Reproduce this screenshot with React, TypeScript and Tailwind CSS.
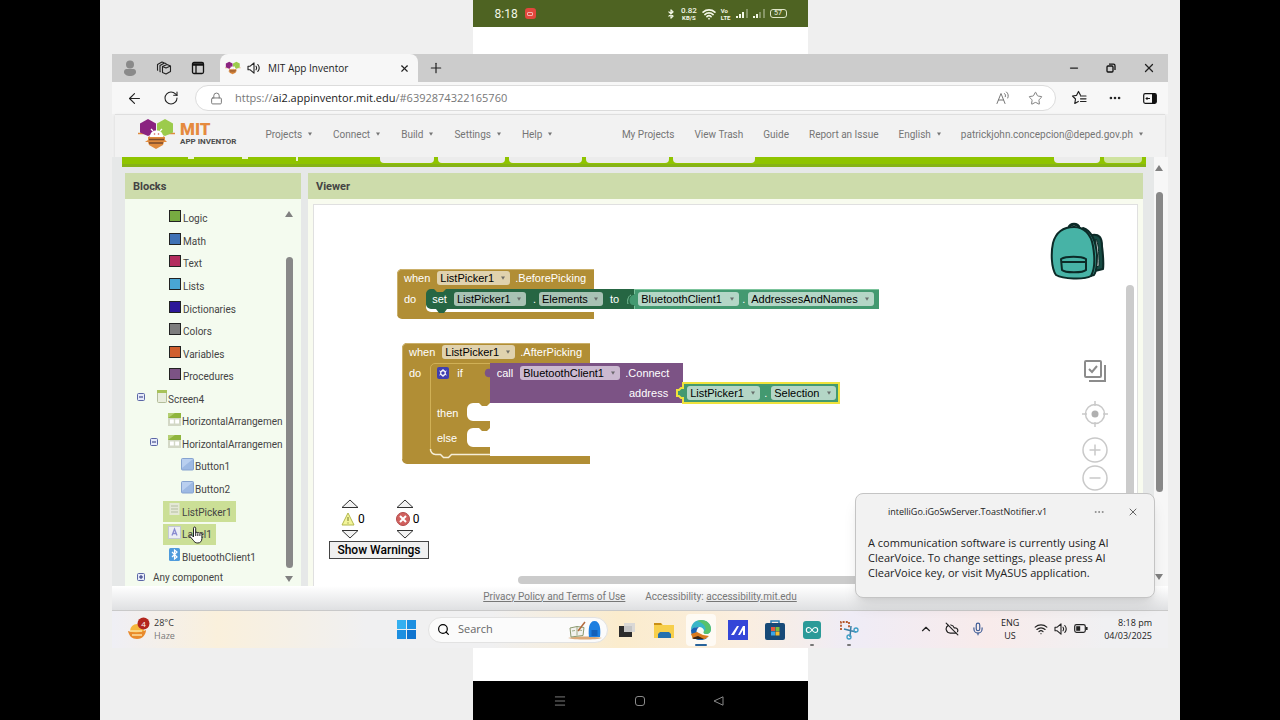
import { ReactNode } from "react"
import clsx from "clsx"
import {
  ArrowLeft,
  Bluetooth,
  ChevronUp,
  CloudOff,
  Ellipsis,
  Lock,
  Menu,
  Mic,
  Minus,
  Plus,
  RotateCw,
  Search,
  Star,
  Wifi,
  X,
} from "lucide-react"

const UI_FONT = "font-['Open_Sans',sans-serif]"
const WEB_FONT = "font-['Roboto',sans-serif]"

/* ---------- logos and icons ---------- */

function BeeLogo({ className }: { className?: string }) {
  return (
    <svg viewBox="0 0 38 30" className={className}>
      <path d="M0 14.500h37" stroke="#e08a3c" strokeWidth="1.400" />
      <path d="M10 0l8 4.500v9L10 17l-8-3.500v-9z" fill="#8a2380" />
      <path d="M27 0l8 4.500v9L27 17l-8-3.500v-9z" fill="#9ccb4c" />
      <path d="M10 18l8-3 9 3v3l2 2h-3l-1 3-7 4-7-4-1-3H7l3-2z" fill="#e08a3c" />
      <path d="M11 20.500h15M11 24h14" stroke="#7a4a2a" strokeWidth="1.500" />
      <path d="M12 18c0-4 2-6.500 6.500-6.500S25 14 25 18z" fill="#fff" />
      <path d="M15 12l-2-2M22 12l2-2" stroke="#fff" strokeWidth="1.300" />
      <circle cx="16.500" cy="15" r=".8" fill="#c55" />
      <circle cx="20.500" cy="15" r=".8" fill="#c55" />
    </svg>
  )
}

function ProfileIcon() {
  return (
    <svg viewBox="0 0 14 16" className="h-4 w-3.5" fill="#8a8a8a">
      <circle cx="7" cy="4.500" r="4" />
      <path d="M1 12c0-2 1-3 2.500-3h7C12 9 13 10 13 12c0 2.500-3 4-6 4s-6-1.500-6-4z" />
    </svg>
  )
}

function WorkspacesIcon() {
  return (
    <svg viewBox="0 0 16 16" className="size-4" fill="none" stroke="#222" strokeWidth="1.100" strokeLinejoin="round">
      <path d="M6.500 6.500l4.500-2 3.500 1.500v5.500L10 14l-3.500-1.500z" />
      <path d="M6.500 6.500L10 8l4.500-2" />
      <path d="M4.500 12L4 11.500V5.500L8.500 3l2 .8" />
      <path d="M2 10.500L1.500 10V4.500L6 2l2 .7" />
    </svg>
  )
}

function TabActionsIcon() {
  return (
    <svg viewBox="0 0 14 14" className="size-3.5" fill="none" stroke="#111" strokeWidth="1.300">
      <rect x="1.500" y="1.500" width="11" height="11" rx="1.500" />
      <path d="M1.500 3.500h11" strokeWidth="2.500" />
      <path d="M5 4v8" />
    </svg>
  )
}

function RestoreIcon() {
  return (
    <svg viewBox="0 0 10 10" className="size-2.5" fill="none" stroke="#111" strokeWidth="1.300">
      <rect x="1" y="3" width="6" height="6" rx="1" />
      <path d="M3 1.200h4.500A1.500 1.500 0 019 2.700V7" />
    </svg>
  )
}

function FavoritesIcon() {
  return (
    <svg viewBox="0 0 16 16" className="size-4" fill="none" stroke="#222" strokeWidth="1.200" strokeLinejoin="round" strokeLinecap="round">
      <path d="M9.500 5.200L7.500 1.500 5.600 5.300 1.500 6l3 3-.7 4.500L7.300 11.500" />
      <path d="M9.500 6H15M9.500 8.800H15M9.500 11.500H15" />
    </svg>
  )
}

function SidebarIcon() {
  return (
    <svg viewBox="0 0 14 11" className="h-[11px] w-3.5" fill="none">
      <rect x=".7" y=".7" width="12.600" height="9.600" rx="1.500" stroke="#111" strokeWidth="1.200" />
      <path d="M9 .7h3a1.500 1.500 0 011.300 1.500v6.600A1.500 1.500 0 0112 10.300H9z" fill="#111" />
      <path d="M7 5.500H3M4.500 4L3 5.500 4.500 7" stroke="#111" />
    </svg>
  )
}

function ReadAloudIcon() {
  return (
    <svg viewBox="0 0 14 14" className="size-3.5" fill="none" stroke="#777" strokeWidth="1" strokeLinecap="round">
      <path d="M1 12.500L5 2.500l4 10M2.500 9h5" />
      <path d="M8.500 2.500c1 .8 1.200 2 .8 3.200M10.500 1c1.800 1.500 2.200 4 1.300 6" />
    </svg>
  )
}

function SpeakerIcon({ className }: { className?: string }) {
  return (
    <svg viewBox="0 0 14 14" className={clsx("size-3.5", className)} fill="none" stroke="currentColor" strokeWidth="1.100" strokeLinecap="round" strokeLinejoin="round">
      <path d="M1 5.200h2.200L7 1.800v10.400L3.200 8.800H1z" />
      <path d="M9 5.200c.8 1.200.8 2.400 0 3.600M10.800 3.500c1.800 2.200 1.800 4.800 0 7" />
    </svg>
  )
}

function BatteryIcon({ className }: { className?: string }) {
  return (
    <svg viewBox="0 0 14 9" className={clsx("h-[9px] w-3.5", className)} fill="none" stroke="#222" strokeWidth="1.200">
      <rect x=".7" y=".7" width="10.600" height="7.600" rx="1.800" />
      <path d="M2.200 2.200h4v4.600h-4z" fill="#222" stroke="none" />
      <path d="M12.800 3v3" strokeWidth="1.600" />
    </svg>
  )
}

function Triangle({ down, className }: { down?: boolean; className?: string }) {
  return (
    <svg viewBox="0 0 8 6" className={clsx("h-1.5 w-2 shrink-0", className)} fill="#808080">
      <path d={down ? "M0 0h8L4 6z" : "M0 6h8L4 0z"} />
    </svg>
  )
}

function Caret({ className }: { className?: string }) {
  return (
    <svg viewBox="0 0 4 4" className={clsx("size-1", className)} fill="currentColor">
      <path d="M0 .5h4L2 3.800z" />
    </svg>
  )
}

function ScreenIcon() {
  return (
    <svg viewBox="0 0 10 13" className="h-[13px] w-2.5">
      <rect x=".5" y=".5" width="9" height="12" rx="1" fill="#e9eddd" stroke="#b3bd9a" />
      <path d="M0 0h10v3H0z" fill="#a8c25a" />
    </svg>
  )
}

function ArrangementIcon() {
  return (
    <svg viewBox="0 0 13 13" className="size-[13px]">
      <rect width="13" height="13" fill="#d3d8c6" />
      <path d="M0 0h13v5H0z" fill="#8fb53c" />
      <path d="M0 0h7L0 5z" fill="#b4cf72" />
      <path d="M2 6.500h3.800v4H2zM7.200 6.500H11v4H7.200z" fill="#fff" />
    </svg>
  )
}

function ButtonIcon() {
  return (
    <svg viewBox="0 0 13 13" className="size-[13px]">
      <rect x=".5" y=".5" width="12" height="11.500" rx="1" fill="#9db9e3" stroke="#86a3d0" />
      <path d="M1 1h11L1 10z" fill="#b9cfef" />
    </svg>
  )
}

function ListIcon() {
  return (
    <svg viewBox="0 0 13 13" className="size-[13px]">
      <rect x="1.500" width="10" height="12" fill="#e4e8d6" />
      <path d="M3 3h7M3 6h7M3 9h7" stroke="#b4bda0" />
    </svg>
  )
}

function LabelIcon() {
  return (
    <svg viewBox="0 0 13 13" className="size-[13px]">
      <rect x=".5" y=".5" width="12" height="12" fill="#eceef4" stroke="#c3c8d6" />
      <path d="M4 9.500l2.500-6.500L9 9.500M5 7.500h3" fill="none" stroke="#8a8cd0" strokeWidth="1.300" />
    </svg>
  )
}

function BluetoothIcon() {
  return (
    <svg viewBox="0 0 13 13" className="size-[13px]">
      <rect x="1" width="11" height="13" rx="1.500" fill="#4f9bdc" />
      <path d="M4 4l5 5-2.500 2V2L9 4 4 9" fill="none" stroke="#fff" strokeWidth="1.200" />
    </svg>
  )
}

function TreeToggle({ open }: { open: boolean }) {
  return (
    <svg viewBox="0 0 8 8" className="size-2" fill="none" stroke="#5b66a6">
      <rect x=".5" y=".5" width="7" height="7" rx="1" fill="#e6eafa" />
      <path d={open ? "M2 4h4" : "M2 4h4M4 2v4"} stroke="#27307a" />
    </svg>
  )
}

function HandCursor({ className }: { className?: string }) {
  return (
    <svg viewBox="0 0 14 18" className={className} fill="#fff" stroke="#222" strokeWidth="1" strokeLinejoin="round">
      <path d="M4.500 11V2.200c0-1.600 2.200-1.600 2.200 0V7c.2-1.200 2-1.100 2.100.2.300-1 2-.8 2.100.4.400-.9 2-.6 2 .7v4.200c0 2.500-1.500 4.500-4 4.500-2.400 0-3.500-.9-4.600-2.700L1 10.600c-.8-1.400.9-2.200 1.800-1.300z" />
      <path d="M6.700 7v3M8.800 7.500V10M10.900 8v2" fill="none" />
    </svg>
  )
}

function Backpack() {
  return (
    <svg viewBox="0 0 56 58" className="h-[58px] w-14" stroke="#0c2a27" strokeWidth="2" strokeLinejoin="round">
      <path d="M42 13c7-1 10 2 10 11 1 9 2 16 1 23l-8 2z" fill="#174b44" />
      <path d="M46 17c2 3 3 12 3 27l-3 1z" fill="#fff" strokeWidth="1" />
      <path d="M33 6c9 3 13 15 14 27 0 8 0 16-3 20l-12 3z" fill="#3a9f92" />
      <path d="M19 6c0-5 10-5 10 0" fill="none" strokeWidth="3" />
      <path d="M6 53C1 46 1 30 3 21 6 10 14 5 24 5s17 7 19 19c2 12 2 23-2 30-7 4-28 3-35-1z" fill="#47b3a6" />
      <path d="M11 37c5-3 20-3 25 0v11c-3 3-21 3-24 0z" fill="#47b3a6" />
      <path d="M11 40h25" />
    </svg>
  )
}

/* ---------- phone bars ---------- */

function PhoneStatusBar() {
  return (
    <div className="mx-auto h-[54px] w-[335px] bg-white">
      <div className={clsx("flex h-[27px] items-center bg-[#4e6322] pr-[21px] pl-[22px] text-[#f3f7e6]", WEB_FONT)}>
        <span className="text-xs">8:18</span>
        <span className="ml-[7px] flex size-[11px] items-center justify-center rounded-[3px] bg-[#e2473d]">
          <span className="h-1 w-1.5 rounded-[1px] border border-[#f6b5ae]" />
        </span>
        <div className="ml-auto flex items-center gap-[5px]">
          <Bluetooth className="size-2.5" strokeWidth={3} />
          <span className="flex flex-col items-center">
            <span className="text-[8px] leading-[8px] font-medium">0.82</span>
            <span className="text-[6px] leading-[6px] font-bold">KB/S</span>
          </span>
          <Wifi className="size-3.5" strokeWidth={3} />
          <span className="flex flex-col text-[6px] leading-[7px] font-bold">
            <span>Vo</span>
            <span>LTE</span>
          </span>
          {[3, 2].map((bars) => (
            <svg key={bars} viewBox="0 0 12 9" className="h-[9px] w-3" fill="currentColor">
              <path d="M0 7h2v2H0zM3 5h2v4H3z" />
              <path d="M6 3h2v6H6z" opacity={bars > 2 ? 1 : 0.35} />
              <path d="M10 0h2v9h-2z" opacity=".35" />
            </svg>
          ))}
          <span className="flex h-[9px] w-[17px] items-center justify-center rounded-[3px] border border-[#dfe6c8] text-[7px] leading-none">
            57
          </span>
        </div>
      </div>
    </div>
  )
}

function PhoneNavBar() {
  return (
    <div className="mx-auto flex h-[72px] w-[335px] flex-col justify-end bg-white">
      <div className="flex h-[39px] items-center justify-center gap-[68px] bg-black pr-1 text-[#8a8a8a]">
        <button aria-label="Menu"><Menu className="size-3.5" strokeWidth={1.5} /></button>
        <button aria-label="Home" className="size-2.5 rounded-[3px] border border-[#8a8a8a]" />
        <button aria-label="Back">
          <svg viewBox="0 0 11 10" className="h-2.5 w-[11px]" fill="none" stroke="currentColor">
            <path d="M10 .8v8.400L1 5z" strokeLinejoin="round" />
          </svg>
        </button>
      </div>
    </div>
  )
}

/* ---------- browser ---------- */

function TabBar() {
  return (
    <div className={clsx("flex h-7 items-center bg-[#cccccc] text-[#222]", UI_FONT)}>
      <div className="flex w-[108px] items-center gap-[19px] pl-[11px]">
        <button aria-label="Profile"><ProfileIcon /></button>
        <button aria-label="Workspaces"><WorkspacesIcon /></button>
        <button aria-label="Tab actions"><TabActionsIcon /></button>
      </div>
      <div className="flex h-full w-[198px] items-center rounded-t-lg bg-[#f7f7f7] pr-2 pl-[5px]">
        <BeeLogo className="h-3.5 w-4" />
        <SpeakerIcon className="ml-1.5" />
        <span className="ml-[7px] text-[10px]">MIT App Inventor</span>
        <button aria-label="Close tab" className="ml-auto"><X className="size-[11px]" strokeWidth={2.5} /></button>
      </div>
      <button aria-label="New tab" className="ml-2.5"><Plus className="size-4" strokeWidth={1.8} /></button>
      <div className="ml-auto flex items-center gap-[26px] pr-3">
        <button aria-label="Minimize"><Minus className="size-3" strokeWidth={2.5} /></button>
        <button aria-label="Restore"><RestoreIcon /></button>
        <button aria-label="Close"><X className="size-3.5" strokeWidth={2.2} /></button>
      </div>
    </div>
  )
}

function AddressBar() {
  return (
    <div className={clsx("flex h-8 items-center bg-[#f7f7f7] pr-[11px] pl-[14px] text-[#222]", UI_FONT)}>
      <button aria-label="Back"><ArrowLeft className="size-[17px]" strokeWidth={1.6} /></button>
      <button aria-label="Refresh" className="ml-5"><RotateCw className="size-4" strokeWidth={1.6} /></button>
      <div className="ml-4 flex h-[26px] flex-1 items-center rounded-full border border-[#dcdcdc] bg-white pr-3 pl-3.5 text-[#777]">
        <Lock className="size-[13px]" strokeWidth={1.8} />
        <p className="ml-3 text-[11px]">
          https://<span className="text-[#1a1a1a]">ai2.appinventor.mit.edu</span>/#6392874322165760
        </p>
        <button aria-label="Read aloud" className="ml-auto"><ReadAloudIcon /></button>
        <button aria-label="Add to favorites" className="ml-[18px]"><Star className="size-[15px]" strokeWidth={1.5} /></button>
      </div>
      <div className="ml-[15px] flex items-center gap-[21px]">
        <button aria-label="Favorites"><FavoritesIcon /></button>
        <button aria-label="More"><Ellipsis className="size-3.5" strokeWidth={2.5} /></button>
        <button aria-label="Sidebar"><SidebarIcon /></button>
      </div>
    </div>
  )
}

function NavItem({ label, menu }: { label: string; menu?: boolean }) {
  return (
    <button className="flex items-center gap-1.5 whitespace-nowrap">
      {label}
      {menu && <Caret />}
    </button>
  )
}

function SiteHeader() {
  return (
    <header className={clsx("mx-[3px] flex h-[43px] items-center border-t border-[#dedede] bg-[#f2f2f2] pr-[22px] pb-1 pl-[23px] text-[#757575] shadow", WEB_FONT)}>
      <a href="#home" className="flex items-center gap-1">
        <BeeLogo className="h-[30px] w-[38px]" />
        <span className="flex flex-col">
          <span className="text-[17px] leading-4 font-black text-[#e58a3e]">MIT</span>
          <span className="text-[8px] leading-[10px] font-bold text-[#4d4d4d]">APP INVENTOR</span>
        </span>
      </a>
      <nav className="ml-[29px] flex items-center gap-[21px] text-[10px]">
        {["Projects", "Connect", "Build", "Settings", "Help"].map((label) => (
          <NavItem key={label} label={label} menu />
        ))}
      </nav>
      <nav className="ml-auto flex items-center gap-5 text-[10px]">
        <NavItem label="My Projects" />
        <NavItem label="View Trash" />
        <NavItem label="Guide" />
        <NavItem label="Report an Issue" />
        <NavItem label="English" menu />
        <NavItem label="patrickjohn.concepcion@deped.gov.ph" menu />
      </nav>
    </header>
  )
}

/* Project toolbar, mostly scrolled under the header */
function ProjectToolbar() {
  return (
    <div className="flex h-2.5 items-start gap-1 overflow-hidden border-b-[3px] border-[#86b317] bg-[#8fc400]">
      <div className="flex w-[254px] items-start gap-12 pl-[66px]">
        <span className="h-0.5 w-1.5 bg-[#eef5d8]" />
        <span className="h-0.5 w-1.5 bg-[#eef5d8]" />
        <span className="h-1 w-0.5 bg-[#eef5d8]" />
      </div>
      <div className="h-1.5 w-[54px] rounded-b bg-[#ececec]" />
      <div className="h-1.5 w-[67px] rounded-b bg-[#ececec]" />
      <div className="h-1.5 w-[73px] rounded-b bg-[#ececec]" />
      <div className="h-1.5 w-[83px] rounded-b bg-[#ececec]" />
      <div className="h-1.5 w-[82px] rounded-b bg-[#ececec]" />
      <div className="ml-auto h-1.5 w-[46px] rounded-b bg-[#ececec]" />
      <div className="mr-1 h-1.5 w-[38px] rounded-b bg-[#cfe3a0]" />
    </div>
  )
}

/* ---------- blocks tree ---------- */

type TreeNode = {
  label: string
  indent: string
  icon: ReactNode
  toggle?: boolean
  selected?: boolean
  cursor?: boolean
}

const swatch = (color: string) => <span className={clsx("mr-px block size-3 border border-[#222]", color)} />

const tree: TreeNode[] = [
  { label: "Logic", indent: "pl-8", icon: swatch("bg-[#77ab41]") },
  { label: "Math", indent: "pl-8", icon: swatch("bg-[#3f71b5]") },
  { label: "Text", indent: "pl-8", icon: swatch("bg-[#b32d5e]") },
  { label: "Lists", indent: "pl-8", icon: swatch("bg-[#49a6d4]") },
  { label: "Dictionaries", indent: "pl-8", icon: swatch("bg-[#2d1799]") },
  { label: "Colors", indent: "pl-8", icon: swatch("bg-[#7d7d7d]") },
  { label: "Variables", indent: "pl-8", icon: swatch("bg-[#d05f2d]") },
  { label: "Procedures", indent: "pl-8", icon: swatch("bg-[#7c5385]") },
  { label: "Screen4", indent: "pl-0", icon: <ScreenIcon />, toggle: true },
  { label: "HorizontalArrangemen", indent: "pl-[31px]", icon: <ArrangementIcon /> },
  { label: "HorizontalArrangemen", indent: "pl-[13px]", icon: <ArrangementIcon />, toggle: true },
  { label: "Button1", indent: "pl-11", icon: <ButtonIcon /> },
  { label: "Button2", indent: "pl-11", icon: <ButtonIcon /> },
  { label: "ListPicker1", indent: "pl-[26px]", icon: <ListIcon />, selected: true },
  { label: "Label1", indent: "pl-[26px]", icon: <LabelIcon />, selected: true, cursor: true },
  { label: "BluetoothClient1", indent: "pl-[31px]", icon: <BluetoothIcon /> },
]

function TreeRow({ node }: { node: TreeNode }) {
  return (
    <li className={clsx("flex min-h-4 flex-1 items-center", node.indent)}>
      {node.toggle && (
        <button aria-label={"Collapse " + node.label} className={clsx("mb-1", node.label === "Screen4" ? "mr-3" : "mr-2.5")}>
          <TreeToggle open />
        </button>
      )}
      <div className={clsx("relative flex items-center gap-px", node.selected && "h-[21px] bg-[#cbdf96] pr-1 pl-[5px]")}>
        <span className="mb-1 shrink-0">{node.icon}</span>
        <span className="pt-px whitespace-nowrap">{node.label}</span>
        {node.cursor && <HandCursor className="absolute top-0.5 left-[26px] h-[18px] w-3.5" />}
      </div>
    </li>
  )
}

function BlocksPanel() {
  return (
    <section className="flex w-44 shrink-0 flex-col">
      <h2 className="flex h-[26px] items-center bg-[#cddcab] pt-0.5 pl-2 text-[11px] font-bold text-[#444]">Blocks</h2>
      <div className="flex flex-1 bg-[#f4fbef] text-[10px] text-[#444]">
        <div className="flex min-w-0 flex-1 flex-col pt-2 pl-3">
          <ul className="flex flex-1 flex-col">
            {tree.map((node, i) => (
              <TreeRow key={i} node={node} />
            ))}
          </ul>
          <div className="flex h-[18px] items-center gap-2">
            <button aria-label="Expand Any component"><TreeToggle open={false} /></button>
            <span>Any component</span>
          </div>
        </div>
        <div className="mr-2 flex w-2 shrink-0 flex-col items-center pt-3 pb-1">
          <Triangle />
          <div className="mt-10 mb-2 w-[7px] flex-1 rounded-full bg-[#888]" />
          <Triangle down />
        </div>
      </div>
    </section>
  )
}

/* ---------- workspace blocks ---------- */

function Field({ value, tone, width }: { value: string; tone: string; width: string }) {
  return (
    <span className={clsx("relative flex h-[14px] items-center rounded-[3px] text-black", tone, width)}>
      <select aria-label={value} className="h-full w-full appearance-none pl-[3px] leading-[14px] outline-none" defaultValue={value}>
        <option>{value}</option>
      </select>
      <Caret className="pointer-events-none absolute right-[5px] text-[#555] opacity-80" />
    </span>
  )
}

const rowClass = "relative flex h-5 items-center"

function BeforePickingBlock() {
  return (
    <div className="absolute top-[64px] left-[83px] h-[51px] w-[483px]">
      <svg viewBox="0 0 483 51" className="absolute inset-0 h-full w-full">
        <path d="M0 5a5 5 0 015-5H197V43H197V50H5a5 5 0 01-5-5z" fill="#b18e35" />
        <path d="M.5 46V5A4.500 4.500 0 015 .5H197" fill="none" stroke="#cbb06a" />
        <path d="M29 36V38a5 5 0 005 5H198V38z" fill="#fff" />
        <path d="M29 25a5 5 0 015-5h3l3 3h6l3-3H237V40H50l-3 4h-5l-3-4h-5a5 5 0 01-5-5z" fill="#266643" />
        <path d="M237 20H482V40H237V36c-6 1-6-10 0-10z" fill="#439970" />
        <path d="M231 35c-1-3 0-8 3-9M237 20.500H482M237.500 20v5M237.500 37v3" fill="none" stroke="#7cc49c" />
      </svg>
      <div className={clsx(rowClass, "gap-[7px] pb-0.5 pl-[7px]")}>
        <span>when</span>
        <Field value="ListPicker1" tone="bg-[#e0d2ae]" width="w-[73px]" />
        <span className="-ml-0.5">.BeforePicking</span>
      </div>
      <div className={clsx(rowClass, "gap-[7px] pl-[7px]")}>
        <span>do</span>
        <span className="ml-[9px]">set</span>
        <Field value="ListPicker1" tone="bg-[#a8c2b4]" width="w-[72px]" />
        <span className="-mr-1">.</span>
        <Field value="Elements" tone="bg-[#a8c2b4]" width="w-[64px]" />
        <span>to</span>
        <span className="ml-3 flex items-center gap-[3px]">
          <Field value="BluetoothClient1" tone="bg-[#b4d6c6]" width="w-[101px]" />
          <span>.</span>
          <Field value="AddressesAndNames" tone="bg-[#b4d6c6]" width="w-[126px]" />
        </span>
      </div>
    </div>
  )
}

function AfterPickingBlock() {
  return (
    <div className="absolute top-[138px] left-[88px] h-[121px] w-[438px]">
      <svg viewBox="0 0 438 121" className="absolute inset-0 h-full w-full">
        <path d="M0 5a5 5 0 015-5H188V20H88V113H188V121H5a5 5 0 01-5-5z" fill="#b18e35" />
        <path d="M.5 116V5A4.500 4.500 0 015 .5H188" fill="none" stroke="#cbb06a" />
        <path d="M28.500 106V25a4.500 4.500 0 014.500-4.500H88" fill="none" stroke="#d0b056" />
        <path d="M28.500 106a5 5 0 005 5.500h5l3 3h5l3-3H88" fill="none" stroke="#f6eed8" strokeWidth="1.500" />
        <path d="M89 60H88l-3 3h-5l-3-3h-6a6 6 0 00-6 6v6a6 6 0 006 6H89z" fill="#fff" />
        <path d="M89 85H88l-3 3h-5l-3-3h-6a6 6 0 00-6 6v7a6 6 0 006 6H89z" fill="#fff" />
        <path d="M88 20H281V60H88V34c-7 2-7-10 0-8z" fill="#7c5385" />
        <path d="M281 40H437V60H281V55h-2l-2-2h-2v-6h2l2-2h2z" fill="#439970" stroke="#efe23c" strokeWidth="2" />
      </svg>
      <div className={clsx(rowClass, "gap-[7px] pb-0.5 pl-[7px]")}>
        <span>when</span>
        <Field value="ListPicker1" tone="bg-[#e0d2ae]" width="w-[73px]" />
        <span className="-ml-0.5">.AfterPicking</span>
      </div>
      <div className={clsx(rowClass, "pl-[7px]")}>
        <span>do</span>
        <button aria-label="Mutator" className="ml-4 flex size-3 items-center justify-center rounded-[2px] bg-[#3f3fb0]">
          <svg viewBox="0 0 10 10" className="size-2.5" fill="none" stroke="#fff">
            <circle cx="5" cy="5" r="2.300" strokeWidth="1.200" />
            <path d="M5 1v1.500M5 7.500V9M1.500 3l1.300.8M7.200 6.200l1.300.8M1.500 7l1.300-.8M7.200 3.800L8.500 3" />
          </svg>
        </button>
        <span className="ml-2">if</span>
        <span className="ml-[34px] flex items-center gap-[7px]">
          <span>call</span>
          <Field value="BluetoothClient1" tone="bg-[#cbb9d0]" width="w-[100px]" />
          <span className="-ml-0.5">.Connect</span>
        </span>
      </div>
      <div className={clsx(rowClass, "pl-[227px]")}>
        <span>address</span>
        <span className="ml-[19px] flex items-center gap-1">
          <Field value="ListPicker1" tone="bg-[#b4d6c6]" width="w-[73px]" />
          <span>.</span>
          <Field value="Selection" tone="bg-[#b4d6c6]" width="w-[65px]" />
        </span>
      </div>
      <div className={clsx(rowClass, "pl-[35px]")}>then</div>
      <div className={clsx(rowClass, "mt-[5px] pl-[35px]")}>else</div>
    </div>
  )
}

function ZoomControls() {
  return (
    <div className="absolute top-[154px] right-[29px] flex flex-col items-center text-[#c9c9c9]">
      <button aria-label="Select multiple">
        <svg viewBox="0 0 24 24" className="size-6" fill="none" stroke="#8c8c8c" strokeWidth="2">
          <rect x="2" y="2" width="16" height="16" rx="1" />
          <path d="M6 10l3 3 5-6M22 6v16H6" />
        </svg>
      </button>
      <button aria-label="Center" className="mt-[18px]">
        <svg viewBox="0 0 26 26" className="size-[26px]" fill="none" stroke="currentColor" strokeWidth="1.500">
          <circle cx="13" cy="13" r="9.500" />
          <circle cx="13" cy="13" r="3.500" fill="#b0b0b0" stroke="none" />
          <path d="M13 0v5M13 21v5M0 13h5M21 13h5" />
        </svg>
      </button>
      <button aria-label="Zoom in" className="mt-2.5">
        <svg viewBox="0 0 26 26" className="size-[26px]" fill="none" stroke="currentColor" strokeWidth="1.500">
          <circle cx="13" cy="13" r="12" />
          <path d="M13 7.500v11M7.500 13h11" />
        </svg>
      </button>
      <button aria-label="Zoom out" className="mt-0.5">
        <svg viewBox="0 0 26 26" className="size-[26px]" fill="none" stroke="currentColor" strokeWidth="1.500">
          <circle cx="13" cy="13" r="12" />
          <path d="M7.500 13h11" />
        </svg>
      </button>
    </div>
  )
}

function WarningColumn({ icon }: { icon: ReactNode }) {
  return (
    <div className="flex flex-col items-start gap-1">
      <svg viewBox="0 0 18 9" className="h-[9px] w-[18px]" fill="#f2f2f2" stroke="#333">
        <path d="M1 8.500h16L9 1z" />
      </svg>
      <div className="flex items-center gap-[3px] text-xs leading-[14px]">
        {icon}0
      </div>
      <svg viewBox="0 0 18 9" className="h-[9px] w-[18px]" fill="#f2f2f2" stroke="#333">
        <path d="M1 .5h16L9 8z" />
      </svg>
    </div>
  )
}

function Warnings() {
  return (
    <div className="absolute bottom-[27px] left-[15px] flex w-[100px] flex-col text-black">
      <div className="flex gap-[31px] pl-3">
        <WarningColumn
          icon={
            <svg viewBox="0 0 14 14" className="size-3.5" fill="#f3f59a" stroke="#b3b84e">
              <path d="M7 1l6 12H1z" />
              <path d="M7 5v4M7 10.500v1" stroke="#77792e" />
            </svg>
          }
        />
        <WarningColumn
          icon={
            <svg viewBox="0 0 14 14" className="size-3.5">
              <circle cx="7" cy="7" r="6.500" fill="#d0605e" stroke="#b24a4a" />
              <path d="M4 4l6 6M10 4l-6 6" stroke="#fff" strokeWidth="2" />
            </svg>
          }
        />
      </div>
      <button className="mt-0.5 h-[18px] border border-[#444] bg-[#f0f0f0] text-xs leading-4 font-medium">Show Warnings</button>
    </div>
  )
}

function ViewerPanel() {
  return (
    <section className="flex min-w-0 flex-1 flex-col">
      <h2 className="flex h-[26px] items-center bg-[#cddcab] pt-0.5 pl-2 text-[11px] font-bold text-[#444]">Viewer</h2>
      <div className="flex flex-1 flex-col bg-[#f8fbef] px-[5px] pt-[5px]">
        <div className="relative flex-1 overflow-hidden border border-b-0 border-[#e0e0e0] bg-white">
          <div className="font-['Liberation_Sans',sans-serif] text-[11px] leading-[14px] text-white">
            <BeforePickingBlock />
            <AfterPickingBlock />
          </div>
          <button aria-label="Backpack" className="absolute top-[17px] right-[31px]"><Backpack /></button>
          <ZoomControls />
          <Warnings />
          <div className="absolute top-20 right-[3px] bottom-3 w-2 rounded-full bg-[#cbcbcb]" />
          <div className="absolute right-3 bottom-0.5 left-[204px] h-2 rounded-full bg-[#cbcbcb]" />
        </div>
      </div>
    </section>
  )
}

function Toast() {
  return (
    <div className={clsx("absolute right-[13px] bottom-3 w-[300px] rounded-lg border border-[#c4c4c4] bg-[#f2f2f2] px-3 pt-2 pb-[17px] text-[#222] shadow-lg", UI_FONT)}>
      <div className="flex h-5 items-center pl-5">
        <span className="text-[9px]">intelliGo.iGoSwServer.ToastNotifier.v1</span>
        <button aria-label="More options" className="ml-auto text-[#888]"><Ellipsis className="size-3" /></button>
        <button aria-label="Dismiss" className="mr-[3px] ml-[22px] text-[#666]"><X className="size-3" /></button>
      </div>
      <p className="mt-[13px] text-[11px] leading-[15px]">
        A communication software is currently using AI
        <br />
        ClearVoice. To change settings, please press AI
        <br />
        ClearVoice key, or visit MyASUS application.
      </p>
    </div>
  )
}

/* ---------- taskbar ---------- */

function AppIcon({ name, active, running, children }: { name: string; active?: boolean; running?: boolean; children: ReactNode }) {
  return (
    <button aria-label={name} className={clsx("relative flex h-8 w-[30px] items-center justify-center rounded", active && "bg-white/70")}>
      <svg viewBox="0 0 20 20" className="size-5">{children}</svg>
      {active && <span className="absolute bottom-0 h-0.5 w-3 rounded-full bg-[#27639b]" />}
      {running && <span className="absolute bottom-0 h-0.5 w-1 rounded-full bg-[#777]" />}
    </button>
  )
}

function Taskbar() {
  return (
    <div className={clsx("grid h-[38px] grid-cols-[283px_auto_1fr] items-center border-t border-[#c9c9c9] bg-[linear-gradient(90deg,#efeff5_0%,#faf0dc_10%,#f0f0f1_24%,#f0f0f1_36%,#fbeccd_48%,#faeee0_60%,#efecf6_70%,#f8ebeb_83%,#f0f0f2_94%)] text-[#333]", UI_FONT)}>
      <div className="flex items-center gap-1 pb-0.5 pl-4 text-[9px]">
        <svg viewBox="0 0 22 24" className="h-6 w-[22px]">
          <circle cx="9" cy="14" r="7" fill="#f6b73c" />
          <path d="M0 14c5 2 13 2 18-1 0 4-3 9-9 9-5 0-8-3-9-8z" fill="#e98a2c" />
          <path d="M2 14h12M4 18h10" stroke="#fbe0a0" strokeWidth="1.500" />
          <circle cx="15.500" cy="6.500" r="6" fill="#b3261e" />
          <text x="15.500" y="9.500" fontSize="8" textAnchor="middle" fill="#fff">4</text>
        </svg>
        <p className="leading-[13px]">
          28°C
          <br />
          <span className="text-[#777]">Haze</span>
        </p>
      </div>

      <div className="flex items-center">
        <button aria-label="Start" className="flex w-[22px] justify-center">
          <svg viewBox="0 0 19 19" className="size-[19px]" fill="#1d8fe0">
            <path d="M0 0h9v9H0z" fill="#35b0f0" />
            <path d="M10 0h9v9h-9zM0 10h9v9H0z" />
            <path d="M10 10h9v9h-9z" fill="#0f74cf" />
          </svg>
        </button>
        <label className="ml-[11px] flex h-[26px] w-[180px] items-center rounded-full border border-[#e2e2e2] bg-[#fbfbfb] pr-1 pl-2">
          <Search className="size-[13px] shrink-0 text-black" strokeWidth={2.2} />
          <input aria-label="Search" placeholder="Search" className="ml-2 w-24 flex-1 text-[11px] outline-none placeholder:text-[#666]" />
          <svg viewBox="0 0 36 20" className="h-5 w-9 shrink-0">
            <path d="M1 18c8-2 26-2 34 0-6 2-28 2-34 0z" fill="#dba977" />
            <path d="M3 8l7-1.500 7 1-1 8-12 1.500z" fill="#f2f2ee" stroke="#8c9a70" />
            <path d="M10 6.500v9M5 11l3-.5M12 10l3 .5" stroke="#8c9a70" strokeWidth=".8" />
            <path d="M11 11l7-9" stroke="#b46a3c" strokeWidth="1.500" />
            <path d="M22 17c-1-8 0-16 5.500-16S34 9 33 17z" fill="#1d7fe0" />
            <path d="M24.500 10h6v6h-6z" fill="#1560b8" />
          </svg>
        </label>
        <div className="ml-1 flex items-center gap-[7px]">
          <AppIcon name="Task view">
            <path d="M2 6h13v11H2z" fill="#2c2c2c" />
            <path d="M7 3h11v9H7z" fill="#d6d6d6" opacity=".9" />
          </AppIcon>
          <AppIcon name="File Explorer">
            <path d="M0 3h7l2 2h11v13H0z" fill="#f7cf4b" />
            <path d="M0 3h7l1 2H0z" fill="#c98f16" />
            <path d="M4 18v-4l2-2h9l2 2v4z" fill="#2470ae" />
          </AppIcon>
          <AppIcon name="Edge" active>
            <path d="M0 10C0 4 4 0 10 0s10 4 10 9c0 3-2 5-5 5-2 0-3-1-2-3 0-2-2-4-5-4-4 0-7 2-8 3z" fill="#38b6c8" />
            <path d="M10 0c6 0 10 4 10 9 0 3-2 5-5 5-2 0-3-1-2-3 3 0 2-8-7-10z" fill="#58c26c" />
            <path d="M0 10c1-2 4-3 8-3-4 3-3 9 2 11 3 1 5 0 7-1-4 5-17 5-17-7z" fill="#1a62b4" />
            <path d="M0 14l6-2 6 3 6 1-4 3H2z" fill="#d97a1f" />
            <path d="M1 18l6-2 6 3H3z" fill="#3b2412" />
          </AppIcon>
          <AppIcon name="MyASUS">
            <path d="M0 0h20v20H0z" fill="#3346d8" />
            <path d="M3 15L9 6h2L6 15zM10 15l5-9h2v9h-2v-5l-3 5z" fill="#fff" />
          </AppIcon>
          <AppIcon name="Microsoft Store">
            <path d="M6 4V1h8v3" fill="none" stroke="#2d7fb5" strokeWidth="1.500" />
            <rect y="3" width="20" height="17" rx="2" fill="#174a78" />
            <path d="M6 7h4v4H6z" fill="#e5573f" />
            <path d="M10.500 7h4v4h-4z" fill="#7fbb3c" />
            <path d="M6 11.500h4v4H6z" fill="#3aa5e8" />
            <path d="M10.500 11.500h4v4h-4z" fill="#f5bd2e" />
          </AppIcon>
          <AppIcon name="Arduino" running>
            <rect x="1" y="1" width="18" height="18" rx="3" fill="#2b9a98" />
            <path d="M10 10c-1-1.500-2-2.500-3.200-2.500a2.500 2.500 0 000 5c1.200 0 2.200-1 3.200-2.500s2-2.500 3.200-2.500a2.500 2.500 0 010 5c-1.200 0-2.200-1-3.200-2.500z" fill="none" stroke="#fff" strokeWidth="1.100" />
          </AppIcon>
          <AppIcon name="Snipping Tool" running>
            <path d="M2 10V2h8v6" fill="none" stroke="#b4572b" strokeWidth="1.800" strokeDasharray="2 1.200" />
            <path d="M5 9l12 3M11 17L12 6" stroke="#3c7fa5" strokeWidth="1.500" />
            <circle cx="17" cy="10" r="2" fill="none" stroke="#3c9cc4" strokeWidth="1.300" />
            <circle cx="10" cy="17" r="2" fill="none" stroke="#3c9cc4" strokeWidth="1.300" />
          </AppIcon>
        </div>
      </div>

      <div className="flex items-center justify-end pr-4 pb-0.5 text-[9px] leading-[13px] text-[#222]">
        <button aria-label="Hidden icons"><ChevronUp className="size-3.5" /></button>
        <CloudOff className="ml-3 size-3.5" />
        <Mic className="ml-3 size-3.5 text-[#3c5a94]" />
        <span className="ml-4 text-center">ENG<br />US</span>
        <Wifi className="ml-[15px] size-3.5" />
        <SpeakerIcon className="ml-1.5" />
        <BatteryIcon className="ml-1.5" />
        <span className="ml-4 text-right">8:18 pm<br />04/03/2025</span>
      </div>
    </div>
  )
}

export default function App() {
  return (
    <div className="flex min-h-screen justify-center bg-black px-[100px]">
      <main className="flex flex-1 flex-col bg-[#efefef]">
        <PhoneStatusBar />
        <div className="mx-3 flex flex-1 flex-col bg-[#f1f1f1]">
          <TabBar />
          <AddressBar />
          <SiteHeader />
          <div className={clsx("relative flex flex-1 flex-col", WEB_FONT)}>
            <div className="flex flex-1 bg-[#e6e8e8]">
              <div className="ml-2.5 flex min-w-0 flex-1 flex-col">
                <ProjectToolbar />
                <div className="mx-[3px] mt-1.5 flex flex-1 gap-[7px]">
                  <BlocksPanel />
                  <ViewerPanel />
                </div>
              </div>
              <div className="ml-2 flex w-3.5 shrink-0 flex-col items-center bg-[#f7f7f7] pt-2 pr-1 pb-1.5">
                <Triangle />
                <div className="mt-[21px] h-[300px] w-[7px] rounded-full bg-[#888]" />
                <Triangle down className="mt-auto" />
              </div>
            </div>
            <footer className="flex h-6 items-center justify-center gap-5 bg-linear-to-b from-white to-[#dfe0e2] pb-1 text-[10px] text-[#777]">
              <a href="#privacy" className="underline">Privacy Policy and Terms of Use</a>
              <span>
                Accessibility: <a href="#accessibility" className="underline">accessibility.mit.edu</a>
              </span>
            </footer>
            <Toast />
          </div>
          <Taskbar />
        </div>
        <PhoneNavBar />
      </main>
    </div>
  )
}
